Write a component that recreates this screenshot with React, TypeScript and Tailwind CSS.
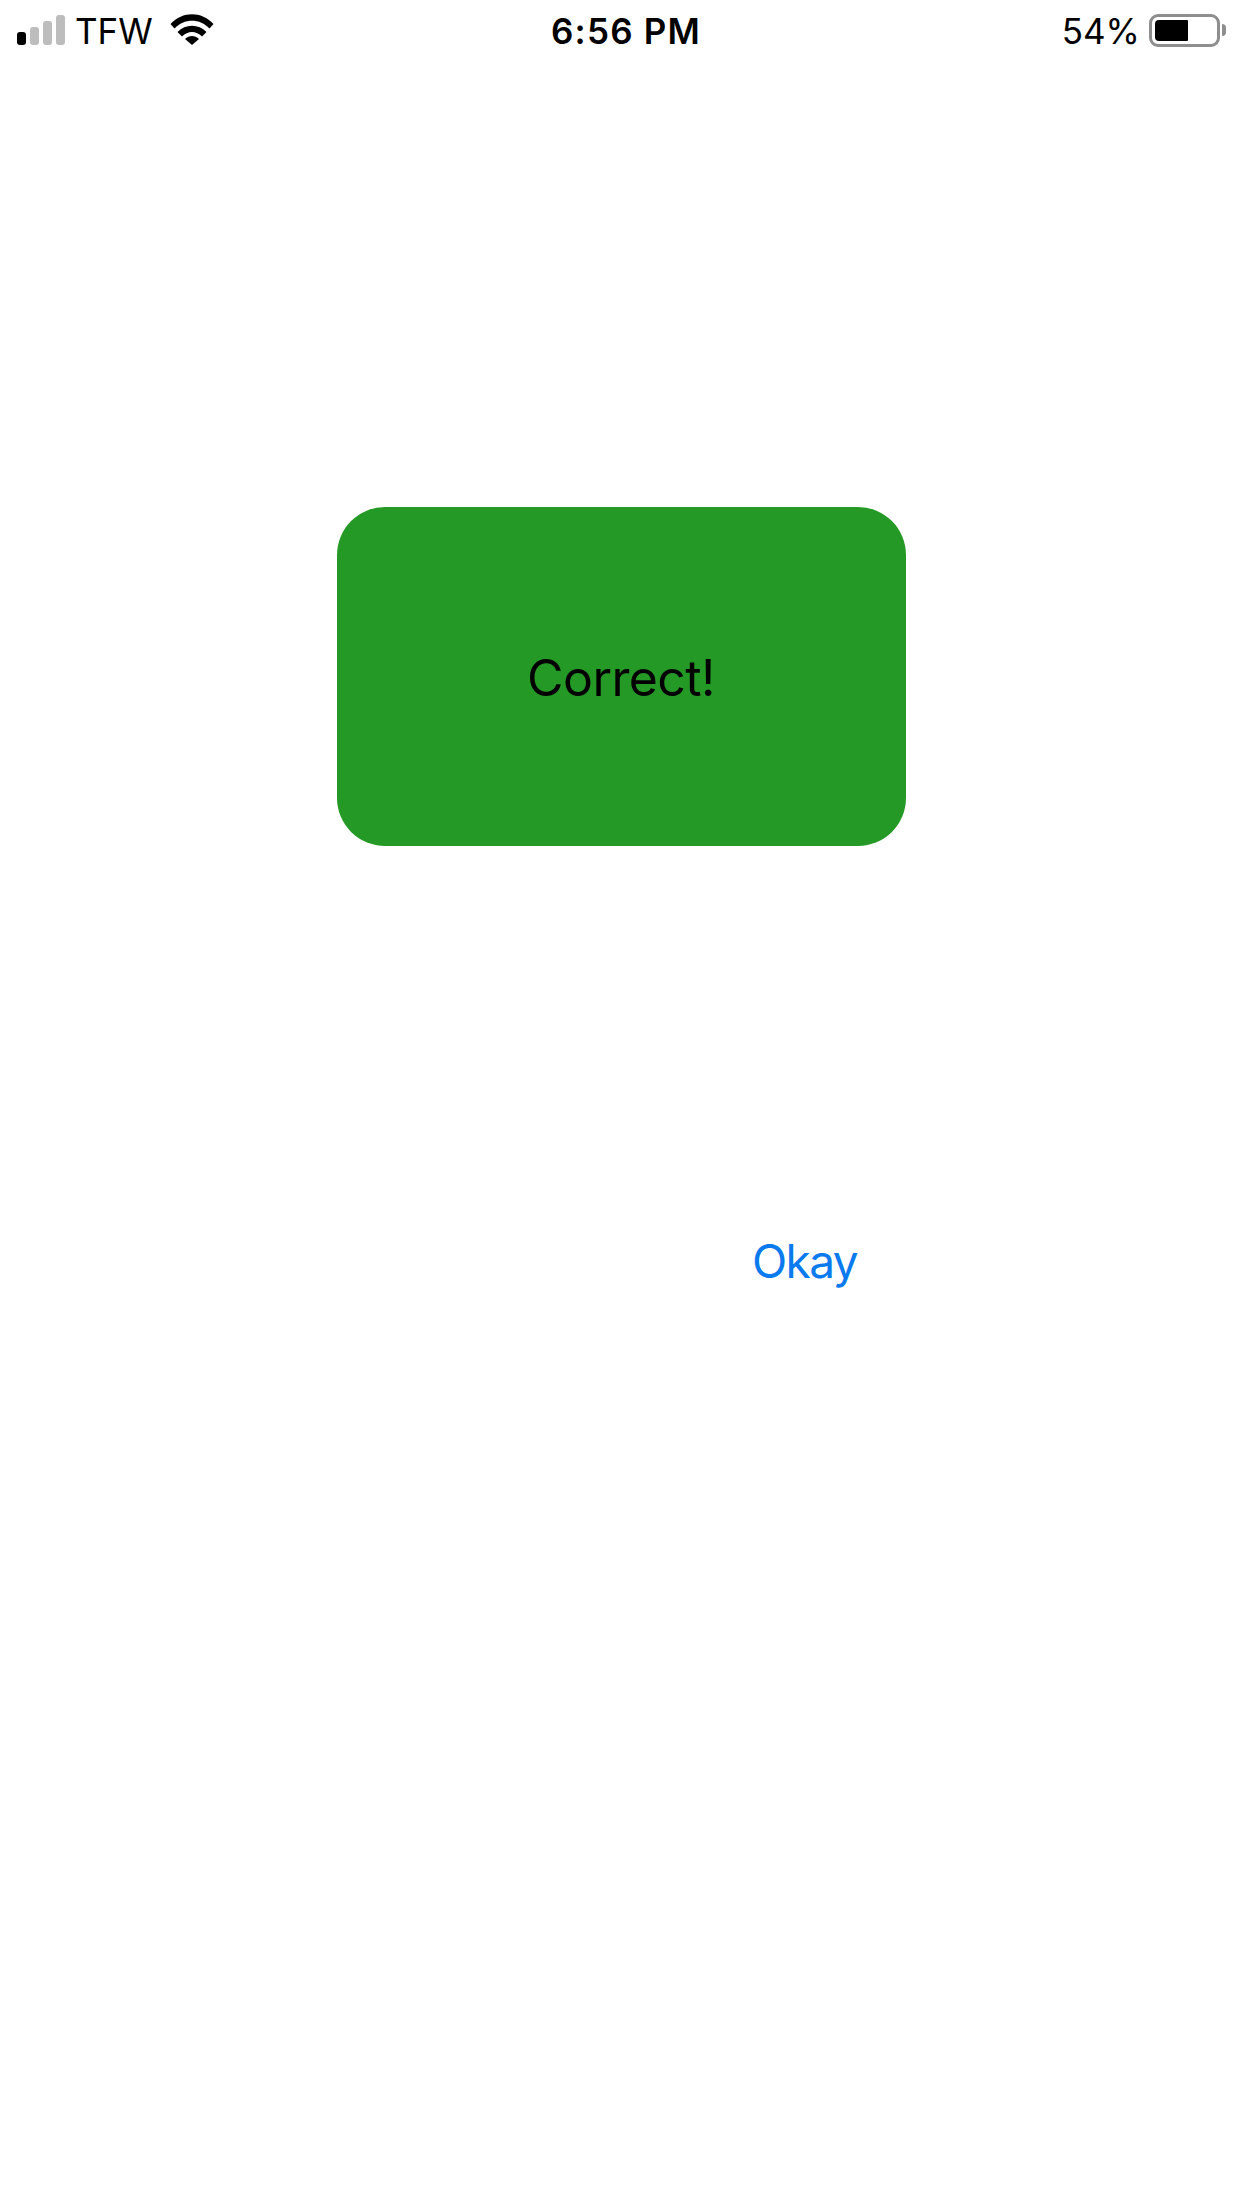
import React from 'react';

function SignalBars() {
  return (
    <div className="flex items-end gap-[4px] h-[30px]">
      <span className="w-[9px] h-[13px] rounded-[3px] bg-black" />
      <span className="w-[9px] h-[18px] rounded-[3px] bg-[#bdbdbd]" />
      <span className="w-[9px] h-[24px] rounded-[3px] bg-[#bdbdbd]" />
      <span className="w-[9px] h-[30px] rounded-[3px] bg-[#bdbdbd]" />
    </div>
  );
}

function WifiIcon() {
  return (
    <svg width="44" height="31" viewBox="0 0 44 31" className="ml-[17px] mb-[1px]">
      <path d="M0.500 10C12.500 -3 31.500 -3 43.500 10L39.500 14.500C30 4 14 4 4.500 14.500Z" fill="#000" />
      <path d="M7.500 18C15.500 9.500 28.500 9.500 36.500 18L32 22.500C26 16.500 18 16.500 12 22.500Z" fill="#000" />
      <path d="M15 25C19 21 25 21 29 25L22 31Z" fill="#000" />
    </svg>
  );
}

function Battery() {
  return (
    <div className="flex items-center ml-[9px]">
      <div className="w-[71px] h-[33px] rounded-[9px] border-[3px] border-[#8e8e8e] p-[3px] flex">
        <div className="w-[33px] h-full rounded-l-[4px] rounded-r-[1px] bg-black" />
      </div>
      <div className="ml-[2px] w-[4px] h-[12px] rounded-r-[4px] bg-[#8e8e8e]" />
    </div>
  );
}

export default function App() {
  return (
    <div className="w-[1242px] h-[2208px] bg-white flex flex-col font-['Inter','Liberation_Sans',sans-serif] text-black">
      {/* status bar */}
      <div className="h-[60px] pl-[17px] pr-[16px] grid grid-cols-3 items-center">
        <div className="flex items-center">
          <SignalBars />
          <span className="ml-[10px] mt-[2px] text-[35px] leading-none">TFW</span>
          <WifiIcon />
        </div>
        <div className="pl-[9px] mt-[2px] text-center text-[35px] font-[560] tracking-[1.2px] leading-none">6:56 PM</div>
        <div className="flex items-center justify-end">
          <span className="mt-[2px] text-[35px] leading-none">54%</span>
          <Battery />
        </div>
      </div>

      <div className="mt-[447px] mx-auto w-[569px] h-[339px] rounded-[48px] bg-[#259926] flex items-center justify-center">
        <span className="mt-[2px] text-[50px] tracking-[-0.6px] leading-none">Correct!</span>
      </div>

      <div className="mt-[392px] pl-[752px] text-[46px] tracking-[-1.6px] leading-none text-[#0a7aee]">Okay</div>
    </div>
  );
}
